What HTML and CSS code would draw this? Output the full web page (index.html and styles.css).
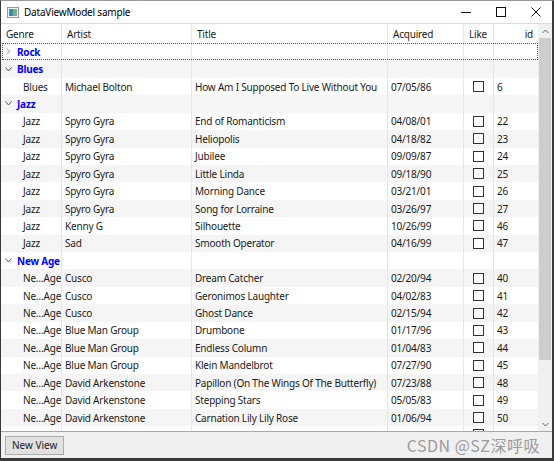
FILE: index.html
```html
<!DOCTYPE html>
<html lang="en">
<head>
    <meta charset="UTF-8">
    <title>DataViewModel sample</title>
    <link rel="stylesheet" href="styles.css">
</head>
<body>
<div class="window">
    <!-- title bar -->
    <div class="titlebar">
        <svg class="app-icon" width="12" height="11" viewBox="0 0 12 11">
            <rect x="0.5" y="0.5" width="11" height="10" fill="#f4f6f8" stroke="#8a9aa6"/>
            <rect x="2" y="2" width="4" height="7" fill="#3d8bb8"/>
            <rect x="6" y="2" width="4" height="7" fill="#7fb07a"/>
        </svg>
        <span class="title">DataViewModel sample</span>
        <div class="controls">
            <svg width="10" height="10" viewBox="0 0 10 10"><path d="M0 5.5h10" stroke="#111" stroke-width="1"/></svg>
            <svg width="10" height="10" viewBox="0 0 10 10"><rect x="0.5" y="0.5" width="9" height="9" fill="none" stroke="#111"/></svg>
            <svg width="10" height="10" viewBox="0 0 10 10"><path d="M0.5 0.5l9 9M9.5 0.5l-9 9" stroke="#111" stroke-width="1"/></svg>
        </div>
    </div>

    <div class="main">
        <div class="list">
            <div class="row header">
                <div class="cell">Genre</div>
                <div class="cell">Artist</div>
                <div class="cell">Title</div>
                <div class="cell">Acquired</div>
                <div class="cell">Like</div>
                <div class="cell num">id</div>
            </div>
            <div class="rows">
                <div class="row group focus">
                    <div class="cell"><svg class="arrow" width="5" height="7" viewBox="0 0 5 7"><path d="M0.5 0.5L4 3.5L0.5 6.5" fill="none" stroke="#a0a0a0"/></svg>Rock</div>
                    <div class="cell"></div><div class="cell"></div><div class="cell"></div><div class="cell"></div><div class="cell"></div>
                </div>
                <div class="row group">
                    <div class="cell"><svg class="arrow" width="7" height="5" viewBox="0 0 7 5"><path d="M0.5 0.5L3.5 4L6.5 0.5" fill="none" stroke="#555"/></svg>Blues</div>
                    <div class="cell"></div><div class="cell"></div><div class="cell"></div><div class="cell"></div><div class="cell"></div>
                </div>
                <div class="row">
                    <div class="cell genre">Blues</div><div class="cell">Michael Bolton</div><div class="cell">How Am I Supposed To Live Without You</div><div class="cell">07/05/86</div><div class="cell like"><span class="check"></span></div><div class="cell">6</div>
                </div>
                <div class="row group">
                    <div class="cell"><svg class="arrow" width="7" height="5" viewBox="0 0 7 5"><path d="M0.5 0.5L3.5 4L6.5 0.5" fill="none" stroke="#555"/></svg>Jazz</div>
                    <div class="cell"></div><div class="cell"></div><div class="cell"></div><div class="cell"></div><div class="cell"></div>
                </div>
                <div class="row">
                    <div class="cell genre">Jazz</div><div class="cell">Spyro Gyra</div><div class="cell">End of Romanticism</div><div class="cell">04/08/01</div><div class="cell like"><span class="check"></span></div><div class="cell">22</div>
                </div>
                <div class="row">
                    <div class="cell genre">Jazz</div><div class="cell">Spyro Gyra</div><div class="cell">Heliopolis</div><div class="cell">04/18/82</div><div class="cell like"><span class="check"></span></div><div class="cell">23</div>
                </div>
                <div class="row">
                    <div class="cell genre">Jazz</div><div class="cell">Spyro Gyra</div><div class="cell">Jubilee</div><div class="cell">09/09/87</div><div class="cell like"><span class="check"></span></div><div class="cell">24</div>
                </div>
                <div class="row">
                    <div class="cell genre">Jazz</div><div class="cell">Spyro Gyra</div><div class="cell">Little Linda</div><div class="cell">09/18/90</div><div class="cell like"><span class="check"></span></div><div class="cell">25</div>
                </div>
                <div class="row">
                    <div class="cell genre">Jazz</div><div class="cell">Spyro Gyra</div><div class="cell">Morning Dance</div><div class="cell">03/21/01</div><div class="cell like"><span class="check"></span></div><div class="cell">26</div>
                </div>
                <div class="row">
                    <div class="cell genre">Jazz</div><div class="cell">Spyro Gyra</div><div class="cell">Song for Lorraine</div><div class="cell">03/26/97</div><div class="cell like"><span class="check"></span></div><div class="cell">27</div>
                </div>
                <div class="row">
                    <div class="cell genre">Jazz</div><div class="cell">Kenny G</div><div class="cell">Silhouette</div><div class="cell">10/26/99</div><div class="cell like"><span class="check"></span></div><div class="cell">46</div>
                </div>
                <div class="row">
                    <div class="cell genre">Jazz</div><div class="cell">Sad</div><div class="cell">Smooth Operator</div><div class="cell">04/16/99</div><div class="cell like"><span class="check"></span></div><div class="cell">47</div>
                </div>
                <div class="row group">
                    <div class="cell"><svg class="arrow" width="7" height="5" viewBox="0 0 7 5"><path d="M0.5 0.5L3.5 4L6.5 0.5" fill="none" stroke="#555"/></svg>New Age</div>
                    <div class="cell"></div><div class="cell"></div><div class="cell"></div><div class="cell"></div><div class="cell"></div>
                </div>
                <div class="row">
                    <div class="cell genre">Ne…Age</div><div class="cell">Cusco</div><div class="cell">Dream Catcher</div><div class="cell">02/20/94</div><div class="cell like"><span class="check"></span></div><div class="cell">40</div>
                </div>
                <div class="row">
                    <div class="cell genre">Ne…Age</div><div class="cell">Cusco</div><div class="cell">Geronimos Laughter</div><div class="cell">04/02/83</div><div class="cell like"><span class="check"></span></div><div class="cell">41</div>
                </div>
                <div class="row">
                    <div class="cell genre">Ne…Age</div><div class="cell">Cusco</div><div class="cell">Ghost Dance</div><div class="cell">02/15/94</div><div class="cell like"><span class="check"></span></div><div class="cell">42</div>
                </div>
                <div class="row">
                    <div class="cell genre">Ne…Age</div><div class="cell">Blue Man Group</div><div class="cell">Drumbone</div><div class="cell">01/17/96</div><div class="cell like"><span class="check"></span></div><div class="cell">43</div>
                </div>
                <div class="row">
                    <div class="cell genre">Ne…Age</div><div class="cell">Blue Man Group</div><div class="cell">Endless Column</div><div class="cell">01/04/83</div><div class="cell like"><span class="check"></span></div><div class="cell">44</div>
                </div>
                <div class="row">
                    <div class="cell genre">Ne…Age</div><div class="cell">Blue Man Group</div><div class="cell">Klein Mandelbrot</div><div class="cell">07/27/90</div><div class="cell like"><span class="check"></span></div><div class="cell">45</div>
                </div>
                <div class="row">
                    <div class="cell genre">Ne…Age</div><div class="cell">David Arkenstone</div><div class="cell">Papillon (On The Wings Of The Butterfly)</div><div class="cell">07/23/88</div><div class="cell like"><span class="check"></span></div><div class="cell">48</div>
                </div>
                <div class="row">
                    <div class="cell genre">Ne…Age</div><div class="cell">David Arkenstone</div><div class="cell">Stepping Stars</div><div class="cell">05/05/83</div><div class="cell like"><span class="check"></span></div><div class="cell">49</div>
                </div>
                <div class="row">
                    <div class="cell genre">Ne…Age</div><div class="cell">David Arkenstone</div><div class="cell">Carnation Lily Lily Rose</div><div class="cell">01/06/94</div><div class="cell like"><span class="check"></span></div><div class="cell">50</div>
                </div>
                <div class="row">
                    <div class="cell genre">Ne…Age</div><div class="cell">Aerosmith</div><div class="cell">Ambrosia Lily</div><div class="cell">06/12/92</div><div class="cell like"><span class="check"></span></div><div class="cell">51</div>
                </div>
            </div>
        </div>

        <!-- vertical scrollbar -->
        <div class="scrollbar">
            <div class="sb-btn">
                <svg width="7" height="5" viewBox="0 0 7 5"><path d="M0.5 4L3.5 1L6.5 4" fill="none" stroke="#606060"/></svg>
            </div>
            <div class="sb-track"><div class="sb-thumb"></div></div>
            <div class="sb-btn">
                <svg width="7" height="5" viewBox="0 0 7 5"><path d="M0.5 1L3.5 4L6.5 1" fill="none" stroke="#606060"/></svg>
            </div>
        </div>
    </div>

    <div class="footer">
        <button class="btn">New View</button>
        <span class="watermark">CSDN @SZ深呼吸</span>
    </div>
</div>
</body>
</html>
```

FILE: styles.css
```css
body {
    margin: 0;
    font-family: "Noto Sans", "Noto Sans CJK SC", sans-serif;
    font-size: 10px;
    letter-spacing: -0.2px;
    color: #1a1a1a;
}

.window {
    width: 554px;
    height: 461px;
    box-sizing: border-box;
    border-top: 1px solid #9a9a9a;
    border-left: 1px solid #3a3a3a;
    border-right: 2px solid #3a3a3a;
    border-bottom: 3px solid #3a3a3a;
    display: flex;
    flex-direction: column;
    background: #fff;
    overflow: hidden;
}

/* title bar */
.titlebar {
    height: 22px;
    flex: none;
    display: flex;
    align-items: center;
    border-bottom: 1px solid #dcdcdc;
    background: #fff;
}

.app-icon {
    margin-left: 6px;
    margin-right: 5px;
}

.title {
    font-size: 10px;
    color: #000;
}

.controls {
    margin-left: auto;
    display: flex;
    gap: 25px;
    margin-right: 11px;
}

/* list area */
.main {
    flex: 1;
    display: flex;
    min-height: 0;
}

.list {
    flex: 1;
    display: flex;
    flex-direction: column;
    overflow: hidden;
}

.row {
    display: grid;
    grid-template-columns: 61px 130px 196px 76px 30px 43px;
    height: 17.43px;
    align-items: stretch;
    position: relative;
}

.rows .row:nth-child(even) {
    background: #f5f5f5;
}

.cell {
    border-right: 1px solid #e6e6e6;
    padding-left: 3px;
    white-space: nowrap;
    overflow: hidden;
    display: flex;
    align-items: center;
}

.row .cell:last-child {
    border-right: none;
}

.header {
    height: 19px;
    flex: none;
    background: #fff;
}

.header .cell {
    padding-left: 5px;
}

.header .cell.num {
    justify-content: flex-end;
    padding-right: 4px;
}

.genre {
    padding-left: 22px;
}

.like {
    justify-content: center;
    padding-left: 0;
}

.check {
    width: 9px;
    height: 9px;
    border: 1px solid #333;
    background: #fff;
}

.group .cell:first-child {
    color: #0000ff;
    font-weight: bold;
    overflow: visible;
    padding-left: 4px;
}

.arrow {
    flex: none;
    width: 7px;
    margin-right: 5px;
}

.focus::after {
    content: "";
    position: absolute;
    left: 1px;
    right: 0;
    top: 0;
    bottom: 0;
    border: 1px dotted #555;
}

/* scrollbar */
.scrollbar {
    width: 14px;
    flex: none;
    background: #f0f0f0;
    display: flex;
    flex-direction: column;
}

.sb-btn {
    height: 14px;
    display: flex;
    align-items: center;
    justify-content: center;
}

.sb-track {
    flex: 1;
    padding: 0 1px;
}

.sb-thumb {
    height: 322px;
    background: #cdcdcd;
}

/* footer */
.footer {
    height: 26px;
    flex: none;
    border-top: 1px solid #a8a8a8;
    background: #f0f0f0;
    display: flex;
    align-items: center;
    padding-left: 4px;
}

.btn {
    font-family: inherit;
    font-size: 10px;
    height: 19px;
    padding: 0 6px;
    background: #e1e1e1;
    border: 1px solid #adadad;
    color: #1a1a1a;
}

.watermark {
    margin-left: auto;
    margin-right: 12px;
    font-family: "Noto Sans CJK SC", sans-serif;
    font-size: 16px;
    color: #9c9c9c;
    letter-spacing: 0.5px;
}
```
